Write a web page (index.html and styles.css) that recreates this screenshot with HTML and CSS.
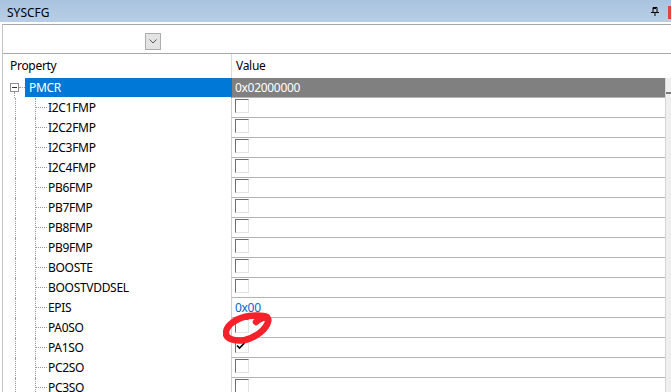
FILE: index.html
```html
<!DOCTYPE html>
<html>
<head>
  <title>SYSCFG</title>
  <link rel="stylesheet" href="styles.css">
</head>
<body>
  <div class="titlebar">
    <span class="title">SYSCFG</span>
    <svg class="pin" width="8" height="9" viewBox="0 0 8 9">
      <path d="M2 0.5h4v5h-4z M2 1.5h3" fill="none" stroke="#000" stroke-width="1"/>
      <path d="M0 5.5h8 M4 6v3" stroke="#000" stroke-width="1"/>
    </svg>
    <span class="close-edge"></span>
  </div>

  <div class="panel">
    <div class="toolbar">
      <button class="dropdown">
        <svg width="8" height="5" viewBox="0 0 8 5"><path d="M0.5 0.5l3.5 3.5l3.5-3.5" fill="none" stroke="#555" stroke-width="1"/></svg>
      </button>
    </div>

    <div class="grid-head">
      <div class="head-name">Property</div>
      <div class="head-value">Value</div>
    </div>

    <div class="grid-body">
      <div class="rows">
        <div class="row parent">
          <div class="name">
            <span class="expander"><span class="box"></span><span class="tail"></span></span>
            <span class="link"></span>
            <span class="label selected">PMCR</span>
          </div>
          <div class="value hex">0x02000000</div>
        </div>

        <div class="row"><div class="name"><span class="rail"></span><span class="branch"><span class="stub"></span></span><span class="label">I2C1FMP</span></div><div class="value"><span class="check"></span></div></div>
        <div class="row"><div class="name"><span class="rail"></span><span class="branch"><span class="stub"></span></span><span class="label">I2C2FMP</span></div><div class="value"><span class="check"></span></div></div>
        <div class="row"><div class="name"><span class="rail"></span><span class="branch"><span class="stub"></span></span><span class="label">I2C3FMP</span></div><div class="value"><span class="check"></span></div></div>
        <div class="row"><div class="name"><span class="rail"></span><span class="branch"><span class="stub"></span></span><span class="label">I2C4FMP</span></div><div class="value"><span class="check"></span></div></div>
        <div class="row"><div class="name"><span class="rail"></span><span class="branch"><span class="stub"></span></span><span class="label">PB6FMP</span></div><div class="value"><span class="check"></span></div></div>
        <div class="row"><div class="name"><span class="rail"></span><span class="branch"><span class="stub"></span></span><span class="label">PB7FMP</span></div><div class="value"><span class="check"></span></div></div>
        <div class="row"><div class="name"><span class="rail"></span><span class="branch"><span class="stub"></span></span><span class="label">PB8FMP</span></div><div class="value"><span class="check"></span></div></div>
        <div class="row"><div class="name"><span class="rail"></span><span class="branch"><span class="stub"></span></span><span class="label">PB9FMP</span></div><div class="value"><span class="check"></span></div></div>
        <div class="row"><div class="name"><span class="rail"></span><span class="branch"><span class="stub"></span></span><span class="label">BOOSTE</span></div><div class="value"><span class="check"></span></div></div>
        <div class="row"><div class="name"><span class="rail"></span><span class="branch"><span class="stub"></span></span><span class="label">BOOSTVDDSEL</span></div><div class="value"><span class="check"></span></div></div>
        <div class="row"><div class="name"><span class="rail"></span><span class="branch"><span class="stub"></span></span><span class="label">EPIS</span></div><div class="value field">0x00</div></div>
        <div class="row"><div class="name"><span class="rail"></span><span class="branch"><span class="stub"></span></span><span class="label">PA0SO</span></div><div class="value"><span class="check"></span></div></div>
        <div class="row"><div class="name"><span class="rail"></span><span class="branch"><span class="stub"></span></span><span class="label">PA1SO</span></div><div class="value"><span class="check checked"><svg width="11" height="11" viewBox="0 0 11 11"><path d="M1 5.5l2.5 2.5l5-5" fill="none" stroke="#000" stroke-width="1.6"/></svg></span></div></div>
        <div class="row"><div class="name"><span class="rail"></span><span class="branch"><span class="stub"></span></span><span class="label">PC2SO</span></div><div class="value"><span class="check"></span></div></div>
        <div class="row"><div class="name"><span class="rail"></span><span class="branch"><span class="stub"></span></span><span class="label">PC3SO</span></div><div class="value"><span class="check"></span></div></div>
      </div>
      <div class="scrollbar"><span class="thumb"></span></div>
    </div>

    <!-- hand drawn marker around PA0SO -->
    <svg class="scribble" width="56" height="40" viewBox="0 0 56 40">
      <path d="M33 11 C40 5 47 5 45 11 C43 18 34 26 22 29 C10 31 2 27 3 21 C4 14 13 7 26 5 C34 4 40 4 44 6" fill="none" stroke="#f5222b" stroke-width="6.5" stroke-linecap="round" stroke-linejoin="round"/>
    </svg>
  </div>
</body>
</html>
```

FILE: styles.css
```css
* {
  margin: 0;
  padding: 0;
  box-sizing: border-box;
}

body {
  font-family: "Noto Sans", Arial, sans-serif;
  font-size: 12px;
  color: #000;
  background: #fff;
  width: 671px;
  height: 392px;
  overflow: hidden;
}

.titlebar {
  display: flex;
  align-items: center;
  height: 22px;
  margin-bottom: 2px;
  padding-left: 7px;
  background: linear-gradient(#a9c3df, #b9cee6);
}

.title {
  flex: 1;
  font-size: 12px;
  padding-top: 2px;
}

.pin {
  margin-right: 9px;
  margin-top: 1px;
}

.close-edge {
  width: 3px;
  height: 13px;
  margin-top: 2px;
  background: #e0443f;
}

.panel {
  position: relative;
  margin-left: 2px;
  border-left: 1px solid #c4c4c4;
  border-top: 1px solid #a8a8a8;
  letter-spacing: -0.3px;
}

.toolbar {
  height: 29px;
  padding: 8px 0 0 142px;
  border-bottom: 1px solid #a8a8a8;
}

.dropdown {
  display: flex;
  align-items: center;
  justify-content: center;
  width: 16px;
  height: 17px;
  background: #e3e3e3;
  border: 1px solid #adadad;
}

.grid-head {
  display: grid;
  grid-template-columns: 228px 1fr;
  height: 24px;
  line-height: 24px;
}

.head-name {
  padding-left: 7px;
}

.head-value {
  padding-left: 4px;
  border-left: 1px solid #dadada;
}

.grid-body {
  display: flex;
}

.rows {
  flex: 1;
}

.row {
  display: grid;
  grid-template-columns: 228px 1fr;
  height: 20px;
}

.name {
  display: flex;
  height: 20px;
}

.label {
  line-height: 19px;
  padding-left: 1px;
}

.label.selected {
  flex: 1;
  height: 19px;
  padding-left: 4px;
  background: #0078d7;
  color: #fff;
}

.expander {
  display: flex;
  flex-direction: column;
  width: 9px;
  margin-left: 7px;
  padding-top: 5px;
}

.box {
  width: 9px;
  height: 9px;
  border: 1px solid #8f8f8f;
  background: #fff;
}

.box::after {
  content: "";
  display: block;
  margin: 3px 1px 0;
  height: 1px;
  background: #333;
}

.tail {
  flex: 1;
  margin-left: 4px;
  border-left: 1px dotted #9a9a9a;
}

.link {
  width: 6px;
  height: 10px;
  border-bottom: 1px dotted #9a9a9a;
}

.rail {
  width: 20px;
  margin-left: 12px;
  border-left: 1px dotted #9a9a9a;
}

.branch {
  width: 12px;
  border-left: 1px dotted #9a9a9a;
}

.stub {
  display: block;
  height: 10px;
  border-bottom: 1px dotted #9a9a9a;
}

.value {
  height: 20px;
  border-left: 1px solid #cfcfcf;
  border-bottom: 1px solid #b4b4b4;
  padding-left: 3px;
  line-height: 19px;
}

.value.hex {
  background: #808080;
  color: #fff;
  border-left-color: #0078d7;
}

.value.field {
  color: #0066cc;
}

.check {
  display: block;
  width: 14px;
  height: 14px;
  margin-top: 1px;
  border-top: 1px solid #6e6e6e;
  border-left: 1px solid #6e6e6e;
  border-right: 1px solid #e3e3e3;
  border-bottom: 1px solid #e3e3e3;
  background: #fff;
}

.check svg {
  display: block;
}

.scrollbar {
  width: 6px;
  border-left: 1px solid #d6d6d6;
  background: #efefef;
  padding-top: 14px;
}

.thumb {
  display: block;
  height: 2px;
  background: #7a7a7a;
}

.scribble {
  position: absolute;
  left: 220px;
  top: 286px;
}
```
